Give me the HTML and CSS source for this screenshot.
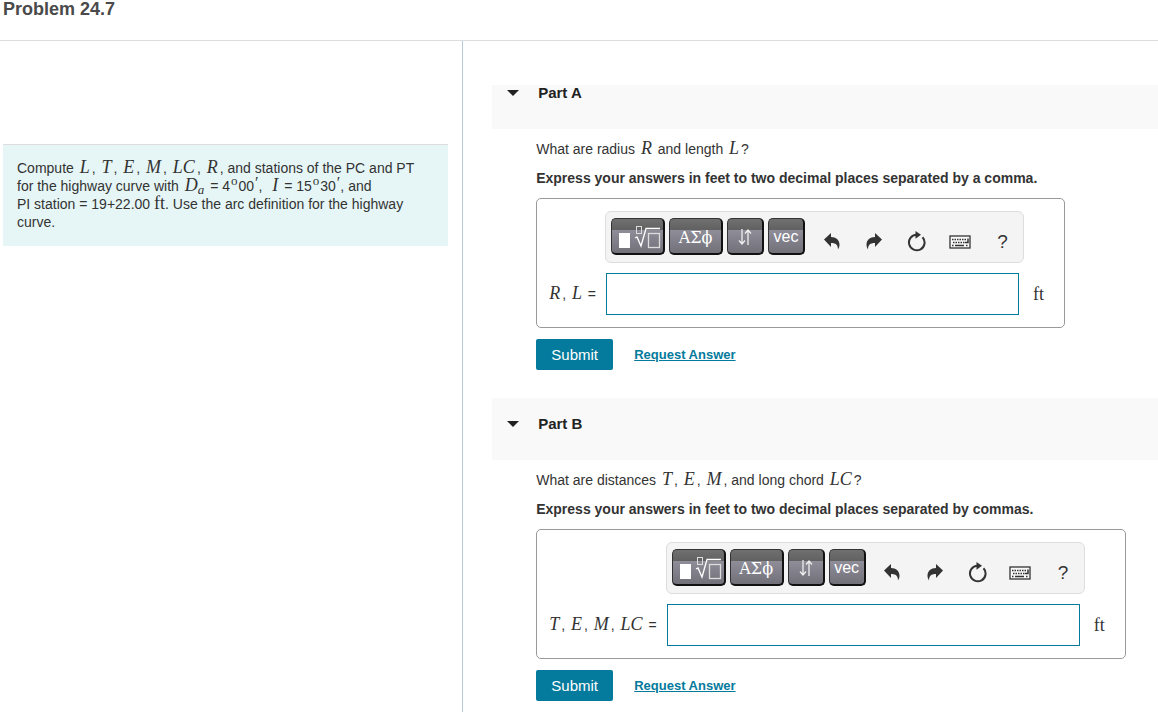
FILE: index.html
```html
<!DOCTYPE html>
<html lang="en">
<head>
    <meta charset="UTF-8">
    <meta name="viewport" content="width=device-width, initial-scale=1.0">
    <title>Problem 24.7</title>
    <link rel="stylesheet" href="styles.css">
</head>
<body>
    <!-- icons shared by both toolbars -->
    <svg class="icon-defs" aria-hidden="true">
        <symbol id="icon-template" viewBox="0 0 42 24">
            <rect x="0" y="8" width="11" height="15" fill="#fff"/>
            <rect x="17.5" y="1.5" width="5" height="7" fill="none" stroke="#ddd"/>
            <path d="M16 13l2-1 4 9 5-17.5h14" fill="none" stroke="#fff" stroke-width="1.3"/>
            <rect x="29.5" y="8.5" width="11" height="14" fill="none" stroke="#ddd" stroke-width="1.3"/>
        </symbol>
        <symbol id="icon-arrows" viewBox="0 0 14 16">
            <path d="M4 0v15M1 11.500l3 3.500 3-3.500M10 16V1M7 4.500l3-3.500 3 3.500" fill="none" stroke="#eee" stroke-width="1.3"/>
        </symbol>
        <symbol id="icon-undo" viewBox="0 0 16 17">
            <path d="M0 6.5L7 0v4c5 0 8.500 3 8.500 7.500 0 2-.6 3.500-1.500 5 0-4.500-2-6.500-7-6.500v4z" fill="#333"/>
        </symbol>
        <symbol id="icon-reset" viewBox="0 0 20 21">
            <path d="M15.500 6.200a7.800 7.800 0 1 1-6-2.500" fill="none" stroke="#333" stroke-width="2"/>
            <path d="M8.500 0l5.500 3.800-5.500 4z" fill="#333"/>
        </symbol>
        <symbol id="icon-keyboard" viewBox="0 0 22 14">
            <rect x="1" y="1" width="20" height="12" fill="#f8f8f8" stroke="#333" stroke-width="1.3"/>
            <path d="M3 4.500h14M4 7.500h12M3 10.500h2M17 10.500h2" stroke="#333" stroke-width="1.500" stroke-dasharray="1.500 1"/>
            <path d="M6 10.500h9M16 7.500h3V3.500" fill="none" stroke="#333" stroke-width="1.500"/>
        </symbol>
    </svg>

    <header class="page-header">
        <h1>Problem 24.7</h1>
    </header>

    <main class="columns">
        <section class="problem">
            <p class="problem-text">
                Compute <i>L</i>, <i>T</i>, <i>E</i>, <i>M</i>, <i>LC</i>, <i>R</i>, and stations of the PC and PT<br>
                for the highway curve with <i>D<sub>a</sub></i> = 4<sup>o</sup>00<sup class="prime">′</sup>,&nbsp; <i>I</i> = 15<sup>o</sup>30<sup class="prime">′</sup>, and<br>
                PI station = 19+22.00 <span class="unit">ft</span>. Use the arc definition for the highway<br>
                curve.
            </p>
        </section>

        <div class="parts">
            <section class="part">
                <div class="part-header part-header-first">
                    <button class="toggle" type="button" aria-label="Collapse Part A"></button>
                    <h2>Part A</h2>
                </div>
                <form class="part-body">
                    <p>What are radius <i>R</i> and length <i>L</i>?</p>
                    <p class="instruction">Express your answers in feet to two decimal places separated by a comma.</p>
                    <div class="answer">
                        <div class="toolbar">
                            <button class="key key-wide key-template" type="button" aria-label="Templates"><svg width="42" height="24"><use href="#icon-template"/></svg></button>
                            <button class="key key-wide key-greek" type="button">ΑΣϕ</button>
                            <button class="key" type="button" aria-label="Arrows"><svg width="14" height="16"><use href="#icon-arrows"/></svg></button>
                            <button class="key key-text" type="button">vec</button>
                            <div class="tools">
                                <button class="tool" type="button" aria-label="Undo"><svg width="16" height="17"><use href="#icon-undo"/></svg></button>
                                <button class="tool" type="button" aria-label="Redo"><svg class="flip" width="16" height="17"><use href="#icon-undo"/></svg></button>
                                <button class="tool" type="button" aria-label="Reset"><svg width="20" height="21"><use href="#icon-reset"/></svg></button>
                                <button class="tool" type="button" aria-label="Keyboard"><svg width="22" height="14"><use href="#icon-keyboard"/></svg></button>
                                <button class="tool" type="button">?</button>
                            </div>
                        </div>
                        <label for="answer-a"><i>R</i>, <i>L</i> =</label>
                        <input type="text" id="answer-a">
                        <span class="unit">ft</span>
                    </div>
                    <div class="actions">
                        <button class="submit" type="submit">Submit</button>
                        <a href="#">Request Answer</a>
                    </div>
                </form>
            </section>

            <section class="part">
                <div class="part-header">
                    <button class="toggle" type="button" aria-label="Collapse Part B"></button>
                    <h2>Part B</h2>
                </div>
                <form class="part-body">
                    <p>What are distances <i>T</i>, <i>E</i>, <i>M</i>, and long chord <i>LC</i>?</p>
                    <p class="instruction">Express your answers in feet to two decimal places separated by commas.</p>
                    <div class="answer">
                        <div class="toolbar">
                            <button class="key key-wide key-template" type="button" aria-label="Templates"><svg width="42" height="24"><use href="#icon-template"/></svg></button>
                            <button class="key key-wide key-greek" type="button">ΑΣϕ</button>
                            <button class="key" type="button" aria-label="Arrows"><svg width="14" height="16"><use href="#icon-arrows"/></svg></button>
                            <button class="key key-text" type="button">vec</button>
                            <div class="tools">
                                <button class="tool" type="button" aria-label="Undo"><svg width="16" height="17"><use href="#icon-undo"/></svg></button>
                                <button class="tool" type="button" aria-label="Redo"><svg class="flip" width="16" height="17"><use href="#icon-undo"/></svg></button>
                                <button class="tool" type="button" aria-label="Reset"><svg width="20" height="21"><use href="#icon-reset"/></svg></button>
                                <button class="tool" type="button" aria-label="Keyboard"><svg width="22" height="14"><use href="#icon-keyboard"/></svg></button>
                                <button class="tool" type="button">?</button>
                            </div>
                        </div>
                        <label for="answer-b"><i>T</i>, <i>E</i>, <i>M</i>, <i>LC</i> =</label>
                        <input type="text" id="answer-b">
                        <span class="unit">ft</span>
                    </div>
                    <div class="actions">
                        <button class="submit" type="submit">Submit</button>
                        <a href="#">Request Answer</a>
                    </div>
                </form>
            </section>
        </div>
    </main>
</body>
</html>
```
FILE: styles.css
```css
* {
    box-sizing: border-box;
}

body {
    margin: 0;
    min-height: 100vh;
    display: flex;
    flex-direction: column;
    font-family: "Liberation Sans", Arial, sans-serif;
    font-size: 14px;
    color: #333;
    background: #fff;
}

h1,
h2,
p {
    margin: 0;
}

button {
    font-family: inherit;
    padding: 0;
    border: none;
    cursor: pointer;
}

svg {
    display: block;
}

.icon-defs {
    position: absolute;
    width: 0;
    height: 0;
}

/* math variables and units */
i,
.unit {
    font-family: "Liberation Serif", "Times New Roman", serif;
    font-size: 18px;
    line-height: 1px;
}

i {
    margin: 0 2px;
}

sub,
sup {
    font-size: 13px;
    line-height: 1px;
}

sup {
    margin: 0 1px;
    font-family: "Liberation Serif", "Times New Roman", serif;
    vertical-align: 6px;
}

sub {
    vertical-align: -3px;
}

.prime {
    margin: 0 1px 0 0;
    font-size: 16px;
    font-style: italic;
    vertical-align: 3px;
}

.page-header {
    padding: 0 3px 22px;
    border-bottom: 1px solid #ddd;
}

.page-header h1 {
    font-size: 18px;
    line-height: 18px;
    color: #4a4a4a;
}

.columns {
    flex: 1;
    display: flex;
}

.problem {
    flex: 0 0 40%;
    padding: 103px 14px 0 3px;
    border-right: 1px solid #b8c8d8;
}

.problem-text {
    padding: 14px 14px 15px;
    line-height: 18px;
    white-space: nowrap;
    background: #e6f6f6;
    border-top: 1px solid #ddd;
}

.parts {
    flex: 1;
    padding: 44px 0 12px 29px;
}

.part + .part {
    margin-top: 28px;
}

.part-header {
    display: flex;
    align-items: center;
    gap: 19px;
    padding: 18px 15px 28px;
    background: #f9f9f9;
}

.part-header-first {
    padding-top: 0;
}

.part-header h2 {
    font-size: 15px;
    line-height: 16px;
    color: #222;
}

.toggle {
    border: 6px solid transparent;
    border-top-color: #222;
    border-bottom: none;
    background: none;
}

.part-body {
    padding: 10px 16px 0 44px;
    line-height: 20px;
}

.part-body .instruction {
    margin: 9px 0 10px;
    font-weight: bold;
}

/* answer box: toolbar above, label / field / unit below */
.answer {
    display: grid;
    grid-template-columns: auto 419px auto;
    column-gap: 9px;
    row-gap: 10px;
    align-items: center;
    width: fit-content;
    padding: 12px 20px 12px 10px;
    border: 1px solid #999;
    border-radius: 5px;
}

.answer label {
    grid-column: 1;
    white-space: nowrap;
}

.answer input {
    width: 413px;
    height: 42px;
    margin-left: 1px;
    padding: 0 8px;
    border: 1px solid #047a9c;
    background: #fff;
}

.toolbar {
    grid-column: 2;
    display: flex;
    gap: 4px;
    height: 52px;
    padding: 6px 5px;
    background: #f4f4f4;
    border: 1px solid #ddd;
    border-radius: 6px;
}

.key {
    display: flex;
    align-items: center;
    justify-content: center;
    width: 37px;
    height: 37px;
    padding-top: 2px;
    color: #fff;
    background: linear-gradient(#707070 0, #616161 32%, #8e8d98 33%, #72717a 100%);
    border: 1px solid #333;
    border-right: 2px solid #111;
    border-bottom: 2px solid #111;
    border-radius: 5px;
}

.key-wide {
    width: 54px;
}

.key-template {
    justify-content: flex-end;
    padding-right: 2px;
}

.key-greek {
    font-family: "DejaVu Serif", "Liberation Serif", serif;
    font-size: 16px;
}

.key-text {
    font-size: 16px;
}

.tools {
    flex: 1;
    display: flex;
    align-items: center;
    justify-content: space-between;
    padding: 9px 3px 0 10px;
}

.tool {
    display: flex;
    align-items: center;
    justify-content: center;
    width: 25px;
    height: 24px;
    font-size: 19px;
    color: #333;
    background: none;
}

.flip {
    transform: scaleX(-1);
}

.actions {
    display: flex;
    align-items: center;
    gap: 21px;
    margin-top: 11px;
}

.submit {
    width: 77px;
    height: 31px;
    font-size: 15px;
    color: #fff;
    background: #047a9c;
    border-radius: 2px;
}

.actions a {
    font-size: 13px;
    font-weight: bold;
    color: #047a9c;
}
```
